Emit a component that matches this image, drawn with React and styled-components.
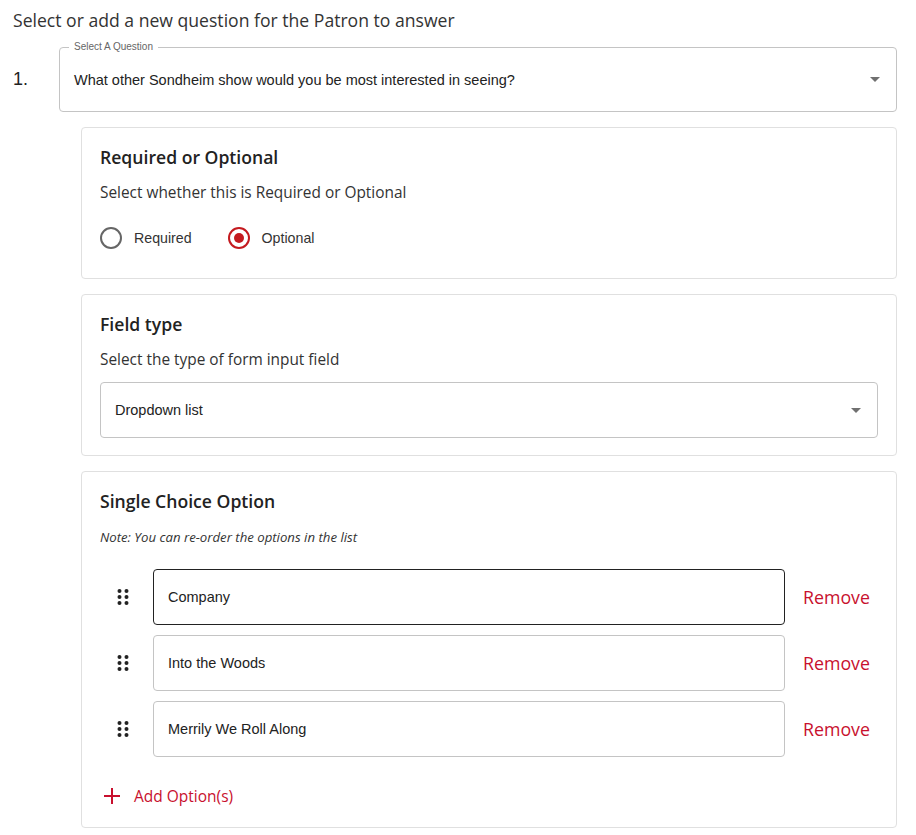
import React from "react";
import styled, { createGlobalStyle } from "styled-components";

const Global = createGlobalStyle`
  html, body { margin: 0; padding: 0; background: #fff; }
  body { font-family: "Open Sans", sans-serif; color: #333; }
  * { box-sizing: border-box; }
`;

const RED = "#c8102e";

const Page = styled.div`
  padding: 8px 19px 8px 13px;
  display: flex;
  flex-direction: column;
`;

const Title = styled.div`
  font-family: "Open Sans", sans-serif;
  font-size: 17.6px;
  line-height: 24px;
  color: #333;
`;

const QuestionRow = styled.div`
  display: flex;
  align-items: center;
  margin-top: 15px;
`;

const Number = styled.div`
  width: 46px;
  font-family: "Liberation Sans", Arial, sans-serif;
  font-size: 18px;
  color: #222;
`;

const OutlinedSelect = styled.fieldset`
  position: relative;
  flex: 1;
  margin: 0;
  height: 65px;
  border: 1px solid #c4c4c4;
  border-radius: 4px;
  padding: 0 14px;
  display: flex;
  align-items: center;
  justify-content: space-between;
  font-family: "Liberation Sans", Arial, sans-serif;
  font-size: 14.5px;
  color: #222;
`;

const Legend = styled.span`
  position: absolute;
  top: -7px;
  left: 9px;
  padding: 0 5px;
  background: #fff;
  font-family: "Liberation Sans", Arial, sans-serif;
  font-size: 10px;
  line-height: 12px;
  color: #666;
`;

const Arrow = styled.span`
  width: 0;
  height: 0;
  border-left: 5px solid transparent;
  border-right: 5px solid transparent;
  border-top: 5px solid #707070;
  margin-right: 2px;
`;

const Cards = styled.div`
  margin-left: 68px;
  margin-top: 15px;
  display: flex;
  flex-direction: column;
  gap: 15px;
`;

const Card = styled.section`
  border: 1px solid #e0e0e0;
  border-radius: 4px;
  padding: 18px 18px ${(p) => p.$pb || 20}px 18px;
`;

const CardTitle = styled.h3`
  margin: 0;
  font-family: "Open Sans", sans-serif;
  font-weight: 600;
  font-size: 17.6px;
  line-height: 22px;
  color: #222;
`;

const CardText = styled.p`
  margin: 15px 0 0;
  font-family: "Open Sans", sans-serif;
  font-size: 15.4px;
  line-height: 20px;
  color: #333;
`;

const Note = styled.p`
  margin: 16px 0 0;
  font-family: "Open Sans", sans-serif;
  font-style: italic;
  font-size: 13.2px;
  line-height: 18px;
  color: #333;
`;

const RadioGroup = styled.div`
  display: flex;
  gap: 36px;
  margin-top: 24px;
`;

const RadioLabel = styled.label`
  display: flex;
  align-items: center;
  gap: 12px;
  font-family: "Liberation Sans", Arial, sans-serif;
  font-size: 14.2px;
  color: #333;
`;

const RadioCircle = styled.span`
  width: 22px;
  height: 22px;
  border-radius: 50%;
  border: 2px solid ${(p) => (p.$checked ? "#c41a1f" : "#666")};
  display: flex;
  align-items: center;
  justify-content: center;
  &::after {
    content: "";
    width: 10px;
    height: 10px;
    border-radius: 50%;
    background: ${(p) => (p.$checked ? "#c41a1f" : "transparent")};
  }
`;

const SelectBox = styled.div`
  margin-top: 12px;
  height: 56px;
  border: 1px solid #c4c4c4;
  border-radius: 4px;
  padding: 0 14px;
  display: flex;
  align-items: center;
  justify-content: space-between;
  font-family: "Liberation Sans", Arial, sans-serif;
  font-size: 14.5px;
  color: #222;
`;

const Options = styled.div`
  margin-top: 23px;
  display: flex;
  flex-direction: column;
  gap: 10px;
`;

const OptionRow = styled.div`
  display: flex;
  align-items: center;
`;

const Handle = styled.div`
  width: 53px;
  display: flex;
  justify-content: center;
  padding-right: 8px;
`;

const InputBox = styled.div`
  flex: 1;
  height: 56px;
  border: 1px solid ${(p) => (p.$focused ? "#222" : "#c4c4c4")};
  border-radius: 4px;
  padding: 0 14px;
  display: flex;
  align-items: center;
  font-family: "Liberation Sans", Arial, sans-serif;
  font-size: 14.5px;
  color: #222;
`;

const RemoveButton = styled.button`
  width: 93px;
  padding: 0 0 0 18px;
  background: none;
  border: 0;
  text-align: left;
  font-family: "Open Sans", sans-serif;
  font-size: 17.8px;
  color: ${RED};
`;

const AddButton = styled.button`
  margin-top: 28px;
  display: flex;
  align-items: center;
  gap: 14px;
  background: none;
  border: 0;
  padding: 0 0 0 4px;
  font-family: "Open Sans", sans-serif;
  font-size: 15.5px;
  color: ${RED};
`;

const DragIcon = () => (
  <svg width="12" height="18" viewBox="0 0 12 18">
    {[3, 9, 15].map((y) =>
      [2.5, 9.5].map((x) => <circle key={`${x}-${y}`} cx={x} cy={y} r="2" fill="#222" />)
    )}
  </svg>
);

const PlusIcon = () => (
  <svg width="16" height="16" viewBox="0 0 16 16">
    <path d="M8 0v16M0 8h16" stroke={RED} strokeWidth="2" />
  </svg>
);

const options = ["Company", "Into the Woods", "Merrily We Roll Along"];

export default function App() {
  return (
    <>
      <Global />
      <Page>
        <Title>Select or add a new question for the Patron to answer</Title>
        <QuestionRow>
          <Number>1.</Number>
          <OutlinedSelect>
            <Legend>Select A Question</Legend>
            <span>What other Sondheim show would you be most interested in seeing?</span>
            <Arrow />
          </OutlinedSelect>
        </QuestionRow>
        <Cards>
          <Card $pb={29}>
            <CardTitle>Required or Optional</CardTitle>
            <CardText>Select whether this is Required or Optional</CardText>
            <RadioGroup>
              <RadioLabel>
                <RadioCircle />
                Required
              </RadioLabel>
              <RadioLabel>
                <RadioCircle $checked />
                Optional
              </RadioLabel>
            </RadioGroup>
          </Card>
          <Card $pb={17}>
            <CardTitle>Field type</CardTitle>
            <CardText>Select the type of form input field</CardText>
            <SelectBox>
              <span>Dropdown list</span>
              <Arrow />
            </SelectBox>
          </Card>
          <Card $pb={20}>
            <CardTitle>Single Choice Option</CardTitle>
            <Note>Note: You can re-order the options in the list</Note>
            <Options>
              {options.map((o, i) => (
                <OptionRow key={o}>
                  <Handle>
                    <DragIcon />
                  </Handle>
                  <InputBox $focused={i === 0}>{o}</InputBox>
                  <RemoveButton>Remove</RemoveButton>
                </OptionRow>
              ))}
            </Options>
            <AddButton>
              <PlusIcon />
              Add Option(s)
            </AddButton>
          </Card>
        </Cards>
      </Page>
    </>
  );
}
